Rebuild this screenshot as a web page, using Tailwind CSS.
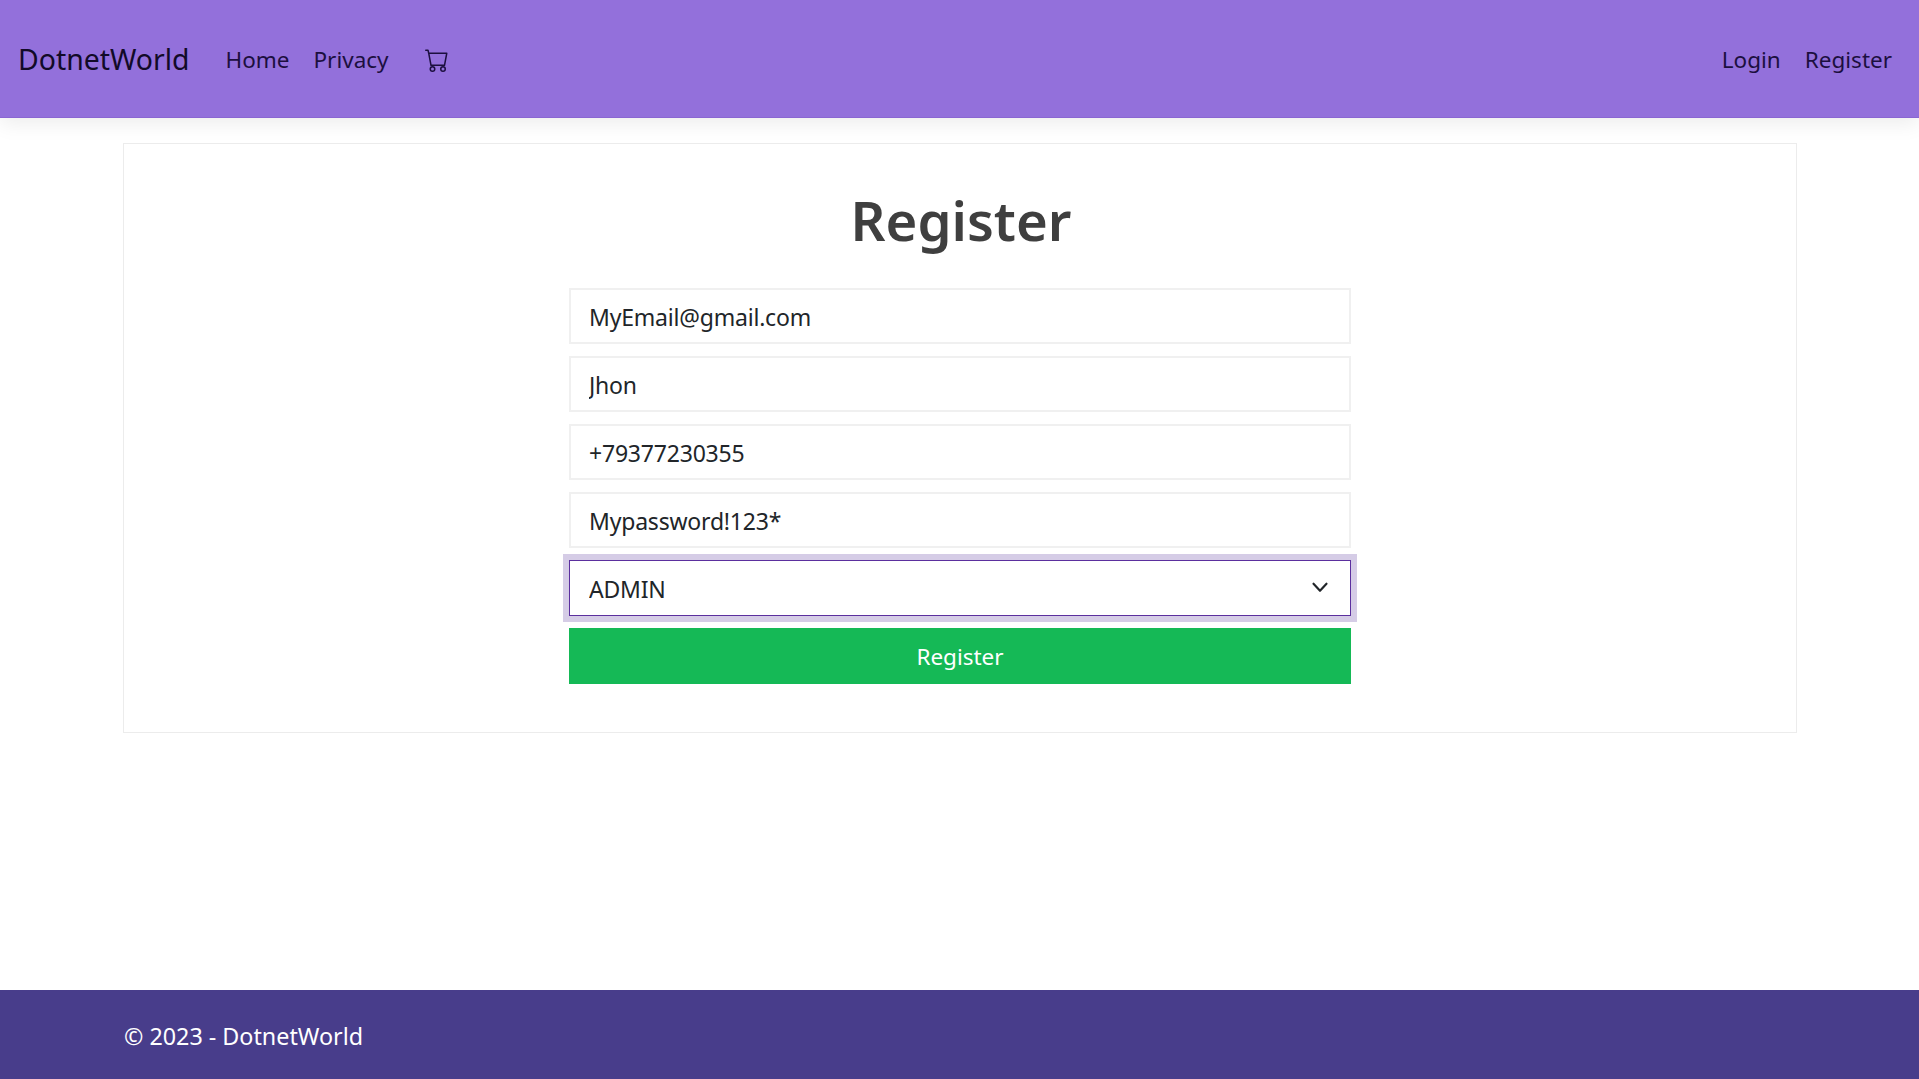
<!DOCTYPE html>
<html lang="en">
<head>
    <meta charset="UTF-8">
    <meta name="viewport" content="width=device-width, initial-scale=1.0">
    <title>Register - DotnetWorld</title>
    <script src="https://cdn.jsdelivr.net/npm/@tailwindcss/browser@4"></script>
</head>
<body class="bg-white h-screen flex flex-col overflow-hidden font-['Noto_Sans',sans-serif] text-[#212529]">
    <!-- Navbar -->
    <header class="h-[118px] shrink-0 bg-[#9370db] border-b border-[#8a66d2] shadow-[0_5px_20px_rgba(0,0,0,0.08)] flex items-center pl-[18px] pr-[27px] text-[#1c0f3f]">
        <a href="#" class="text-[28.400px] text-[#120a28] mr-[36px] pt-[1px]">DotnetWorld</a>
        <nav class="flex items-center gap-[24px] text-[22.500px] pt-[3px]">
            <a href="#">Home</a>
            <a href="#">Privacy</a>
            <a href="#" class="ml-[12px]">
                <svg xmlns="http://www.w3.org/2000/svg" class="w-[24px] h-[24px]" viewBox="0 0 16 16" fill="currentColor">
                    <path d="M0 1.500A.5.5 0 0 1 .5 1H2a.5.5 0 0 1 .485.379L2.890 3H14.500a.5.5 0 0 1 .491.592l-1.500 8A.5.5 0 0 1 13 12H4a.5.5 0 0 1-.491-.408L2.010 3.607 1.610 2H.5a.5.5 0 0 1-.5-.5zM3.102 4l1.313 7h8.170l1.313-7H3.102zM5 12a2 2 0 1 0 0 4 2 2 0 0 0 0-4zm7 0a2 2 0 1 0 0 4 2 2 0 0 0 0-4zm-7 1a1 1 0 1 1 0 2 1 1 0 0 1 0-2zm7 0a1 1 0 1 1 0 2 1 1 0 0 1 0-2z"/>
                </svg>
            </a>
        </nav>
        <nav class="ml-auto flex items-center gap-[24px] text-[22.500px] pt-[3px]">
            <a href="#">Login</a>
            <a href="#">Register</a>
        </nav>
    </header>

    <!-- Main -->
    <main class="flex-1 pl-[123px] pr-[122px] pt-[25px]">
        <div class="h-[590px] border border-[#ececec] pt-[40px]">
            <h1 class="text-center text-[54.500px] leading-[72px] font-semibold text-[#3f3f3f] mb-[32px] pl-[2px]">Register</h1>
            <form class="w-[782px] ml-[445px] flex flex-col gap-[12px] text-[23px] tracking-[-0.2px]">
                <input type="text" value="MyEmail@gmail.com" class="h-[56px] px-[18px] pt-[2px] border-2 border-[#f0f0f0] outline-none">
                <input type="text" value="Jhon" class="h-[56px] px-[18px] pt-[2px] border-2 border-[#f0f0f0] outline-none">
                <input type="text" value="+79377230355" class="h-[56px] px-[18px] pt-[2px] border-2 border-[#f0f0f0] outline-none">
                <input type="text" value="Mypassword!123*" class="h-[56px] px-[18px] pt-[2px] border-2 border-[#f0f0f0] outline-none">
                <div class="relative">
                    <select class="w-full h-[56px] pl-[19px] pr-[18px] pt-[3px] appearance-none bg-white border border-[#5b2f9e] ring-[6px] ring-[#d5cce6] outline-none">
                        <option>ADMIN</option>
                    </select>
                    <!-- Select arrow -->
                    <svg xmlns="http://www.w3.org/2000/svg" class="absolute right-[22px] top-[21px] w-[18px] h-[13px] pointer-events-none" viewBox="0 0 16 12" fill="none" stroke="#212529" stroke-width="2" stroke-linecap="round" stroke-linejoin="round">
                        <path d="M2 2.500l6 6.500 6-6.500"/>
                    </svg>
                </div>
                <button type="button" class="h-[56px] pt-[2px] bg-[#15b956] text-white text-[22.500px] tracking-normal">Register</button>
            </form>
        </div>
    </main>

    <!-- Footer -->
    <footer class="h-[89px] shrink-0 bg-[#483d8b] text-white text-[23.300px] flex items-center px-[124px] pt-[3px]">
        <span>© 2023 - DotnetWorld</span>
    </footer>
</body>
</html>
